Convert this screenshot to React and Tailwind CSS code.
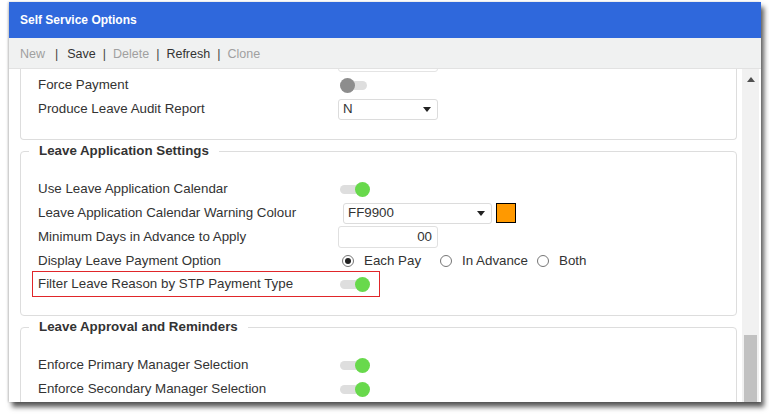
const font = { fontFamily: '"Liberation Sans", Arial, sans-serif' };

function Toggle({ on }) {
    return (
        <div className="relative ml-[2px] h-[15px] w-[30px]">
            <div className="absolute left-0 top-[3px] h-[9px] w-[27px] rounded-full bg-[#dedede]" />
            {on ? (
                <div className="absolute left-[15px] top-0 h-[15px] w-[15px] rounded-full bg-[#68d94c]" />
            ) : (
                <div className="absolute left-0 top-0 h-[15px] w-[15px] rounded-full bg-[#8d8d8d]" />
            )}
        </div>
    );
}

function Arrow() {
    return (
        <svg width="8" height="5" viewBox="0 0 8 5" className="shrink-0">
            <path d="M0 0 L8 0 L4 5 Z" fill="#222" />
        </svg>
    );
}

function Select({ value, className }) {
    return (
        <div
            className={`flex h-[21px] items-center justify-between rounded-[3px] border border-[#dcdcdc] bg-white pl-[4px] pr-[6px] text-[#333] ${className}`}
        >
            <span>{value}</span>
            <Arrow />
        </div>
    );
}

function Radio({ checked, label, width }) {
    return (
        <div className={`flex items-center ${width}`}>
            <span className="flex h-[12px] w-[12px] items-center justify-center rounded-full border border-[#767676] bg-white">
                {checked && (
                    <span className="h-[6px] w-[6px] rounded-full bg-[#222]" />
                )}
            </span>
            <span className="ml-[10px]">{label}</span>
        </div>
    );
}

function Row({ label, children }) {
    return (
        <div className="flex h-[24px] items-center">
            <div className="w-[300px] shrink-0">{label}</div>
            <div className="flex items-center">{children}</div>
        </div>
    );
}

function Fieldset({ title, children, className = '' }) {
    return (
        <fieldset
            className={`rounded-[4px] border border-[#dddddd] ${className}`}
        >
            <legend className="ml-[8px] px-[10px] text-[13.33px] font-bold leading-[16px] text-[#333]">
                {title}
            </legend>
            <div className="pl-[17px]">{children}</div>
        </fieldset>
    );
}

export default function App() {
    return (
        <div
            className="h-[418px] w-[769px] bg-white pl-[9px] pt-[2px]"
            style={font}
        >
            <div className="flex h-[400px] w-[752px] flex-col bg-white shadow-[3px_5px_5px_rgba(0,0,0,0.65),-1px_0_2px_rgba(0,0,0,0.2)]">
                <div className="flex h-[36px] items-center bg-[#2f68dc] px-[11px] text-[12px] font-bold text-white">
                    Self Service Options
                </div>
                <div className="flex h-[31px] items-center border-b border-[#e2e2e2] bg-[#f0f1f1] px-[11px] pt-[2px] text-[12.5px] text-[#333]">
                    <span className="text-[#a0a0a0]">New</span>
                    <span className="ml-[10px] mr-[9px] text-[#444]">|</span>
                    <span>Save</span>
                    <span className="mx-[7px] text-[#444]">|</span>
                    <span className="text-[#a0a0a0]">Delete</span>
                    <span className="mx-[7px] text-[#444]">|</span>
                    <span>Refresh</span>
                    <span className="mx-[7px] text-[#444]">|</span>
                    <span className="text-[#a0a0a0]">Clone</span>
                </div>
                <div className="flex min-h-0 flex-1 pr-[2px]">
                    <div className="min-w-0 flex-1 overflow-hidden pl-[11px] pr-[5px] text-[13.33px] text-[#333]">
                        <div className="-mt-[20px]">
                            <div className="rounded-b-[4px] border border-t-0 border-[#dddddd] pb-[18px] pl-[17px]">
                                <Row label="">
                                    <div className="h-[22px] w-[100px] rounded-[3px] border border-[#e4e4e4]" />
                                </Row>
                                <Row label="Force Payment">
                                    <Toggle on={false} />
                                </Row>
                                <Row label="Produce Leave Audit Report">
                                    <Select value="N" className="w-[100px]" />
                                </Row>
                            </div>

                            <Fieldset
                                title="Leave Application Settings"
                                className="mt-[3px] pb-[18px]"
                            >
                                <div className="pt-[18px]">
                                    <Row label="Use Leave Application Calendar">
                                        <Toggle on />
                                    </Row>
                                    <Row label="Leave Application Calendar Warning Colour">
                                        <Select
                                            value="FF9900"
                                            className="ml-[5px] w-[149px]"
                                        />
                                        <div className="ml-[4px] h-[20px] w-[20px] border border-black bg-[#ff9900]" />
                                    </Row>
                                    <Row label="Minimum Days in Advance to Apply">
                                        <div className="flex h-[22px] w-[100px] items-center justify-end rounded-[3px] border border-[#e0e0e0] pr-[5px]">
                                            00
                                        </div>
                                    </Row>
                                    <Row label="Display Leave Payment Option">
                                        <div className="ml-[4px] flex items-center">
                                            <Radio
                                                checked
                                                label="Each Pay"
                                                width="w-[98px]"
                                            />
                                            <Radio
                                                label="In Advance"
                                                width="w-[97px]"
                                            />
                                            <Radio label="Both" width="" />
                                        </div>
                                    </Row>
                                    <div className="-mt-[2px] -ml-[6px] flex h-[26px] w-[348px] items-center border border-[#e0262a] pl-[5px]">
                                        <div className="w-[300px] shrink-0">
                                            Filter Leave Reason by STP Payment Type
                                        </div>
                                        <Toggle on />
                                    </div>
                                </div>
                            </Fieldset>

                            <Fieldset
                                title="Leave Approval and Reminders"
                                className="mt-[3px] pb-[17px]"
                            >
                                <div className="pt-[18px]">
                                    <Row label="Enforce Primary Manager Selection">
                                        <Toggle on />
                                    </Row>
                                    <Row label="Enforce Secondary Manager Selection">
                                        <Toggle on />
                                    </Row>
                                    <Row label="">
                                        <div className="h-[22px] w-[100px] rounded-[3px] border border-[#e4e4e4]" />
                                    </Row>
                                </div>
                            </Fieldset>
                        </div>
                    </div>
                    <div className="flex w-[17px] shrink-0 flex-col bg-[#f1f1f1]">
                        <div className="flex h-[20px] items-center justify-center">
                            <svg width="8" height="5" viewBox="0 0 8 5">
                                <path d="M0 5 L8 5 L4 0 Z" fill="#505050" />
                            </svg>
                        </div>
                        <div className="flex-1" />
                        <div className="mx-[2px] h-[67px] bg-[#c1c1c1]" />
                    </div>
                </div>
            </div>
        </div>
    );
}
